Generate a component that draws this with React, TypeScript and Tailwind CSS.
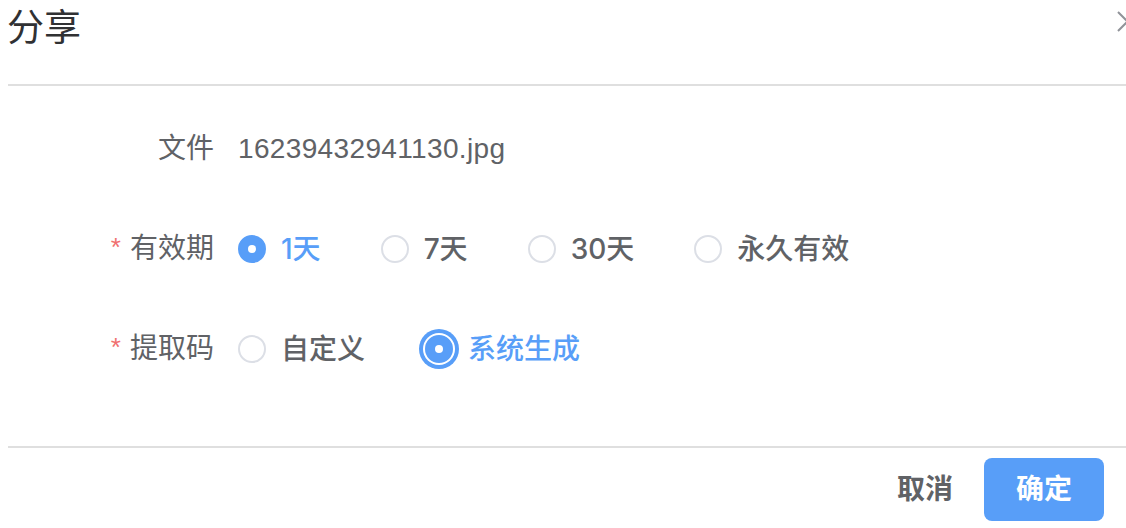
import { useState } from 'react'

const Radio = ({ label, checked, focused, onClick }: { label: string, checked: boolean, focused?: boolean, onClick: () => void }) => (
  <label onClick={onClick} className="flex items-center mr-[60px] cursor-pointer select-none">
    <span
      className={`relative flex items-center justify-center w-[28px] h-[28px] rounded-full border-2
        ${checked ? 'bg-[#589ef8] border-[#589ef8]' : 'bg-white border-[#dcdfe6]'}
        ${focused ? 'shadow-[0_0_0_2px_#fff,0_0_0_6px_#589ef8]' : ''}`}>
      {checked && <span className="w-[8px] h-[8px] rounded-full bg-white" />}
    </span>
    <span
      className={`ml-[15px] text-[28px] leading-[32px] font-medium font-['Inter','Noto_Sans_CJK_SC',sans-serif]
        ${checked ? 'text-[#589ef8]' : 'text-[#606266]'}`}>
      {label}
    </span>
  </label>
)

const FormRow = ({ label, required, children }: { label: string, required?: boolean, children: React.ReactNode }) => (
  <div className="flex items-center h-[56px]">
    <div className="w-[238px] pr-[24px] flex justify-end items-center text-[28px] text-[#606266]">
      {required && <span className="text-[#f07070] mr-[9px] text-[26px] leading-none -mt-[4px]">*</span>}
      <span>{label}</span>
    </div>
    <div className="flex items-center">{children}</div>
  </div>
)

export default function App() {
  const [period, setPeriod] = useState('1天')
  const [code, setCode] = useState('系统生成')

  return (
    <div
      className="w-[1126px] h-[528px] bg-white overflow-hidden flex flex-col"
      style={{ fontFamily: '"Liberation Sans", "Noto Sans CJK SC", sans-serif' }}>

      {/* Header */}
      <div className="relative h-[84px] pl-[7px] shrink-0">
        <h2 className="mt-[9px] text-[37px] leading-[40px] text-[#303133]">分享</h2>
        <button className="absolute left-[1116px] top-[11px] text-[#909399]" title="关闭">
          <svg width="22" height="22" viewBox="0 0 22 22" fill="none" stroke="currentColor" strokeWidth={2}>
            <path d="M2 1l19 19M21 1L2 20" />
          </svg>
        </button>
      </div>
      <div className="ml-[8px] h-[2px] bg-[#dfdfdf] shrink-0" />

      {/* Body */}
      <div className="h-[360px] pt-[35px] flex flex-col gap-[44px] shrink-0">
        <FormRow label="文件">
          <span className="text-[28px] tracking-[0.35px] text-[#606266]">16239432941130.jpg</span>
        </FormRow>
        <FormRow label="有效期" required>
          {['1天', '7天', '30天', '永久有效'].map((p) => (
            <Radio key={p} label={p} checked={period === p} onClick={() => setPeriod(p)} />
          ))}
        </FormRow>
        <FormRow label="提取码" required>
          {['自定义', '系统生成'].map((c) => (
            <Radio key={c} label={c} checked={code === c} focused={c === '系统生成' && code === c} onClick={() => setCode(c)} />
          ))}
        </FormRow>
      </div>
      <div className="ml-[8px] h-[2px] bg-[#dfdfdf] shrink-0" />

      {/* Footer */}
      <div className="flex justify-end items-center pt-[10px] pr-[22px]">
        <button className="mr-[31px] text-[28px] font-bold text-[#606266]">取消</button>
        <button className="w-[120px] h-[63px] rounded-[8px] bg-[#589ef8] text-white text-[28px] font-bold">
          确定
        </button>
      </div>
    </div>
  )
}
